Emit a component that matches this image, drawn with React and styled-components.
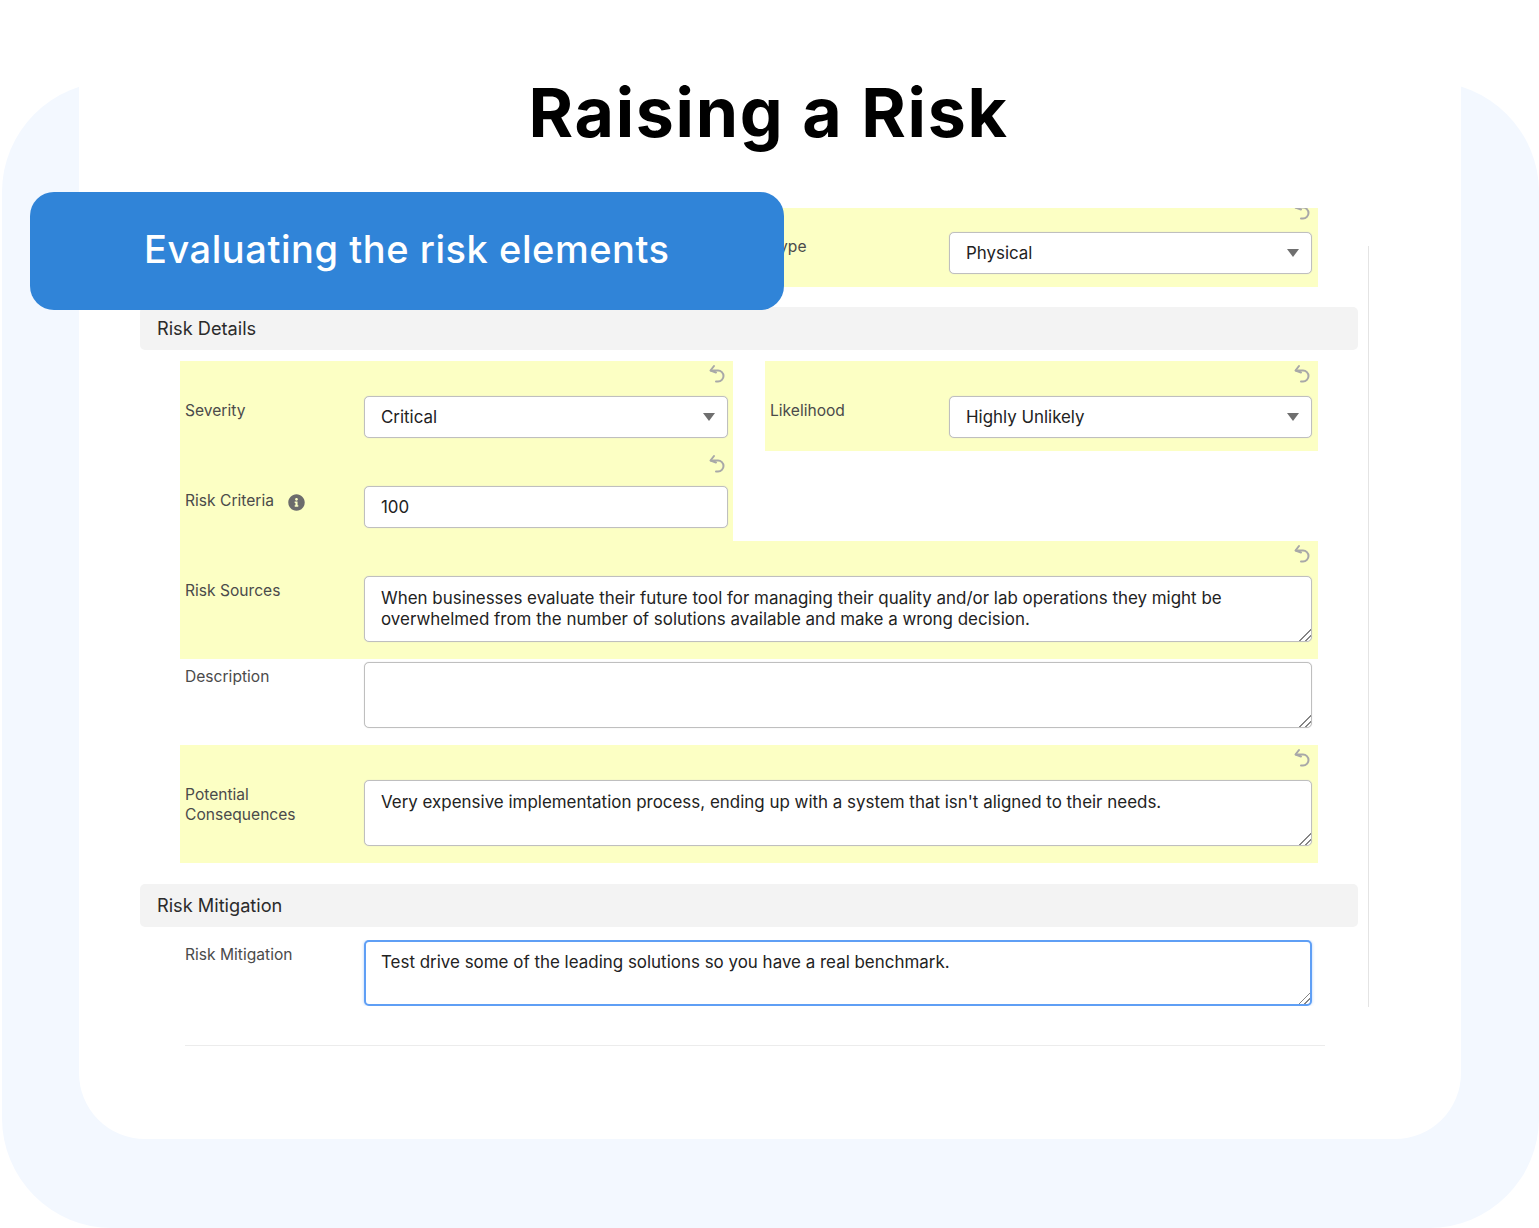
import styled, { createGlobalStyle } from "styled-components";
import { FaInfoCircle } from "react-icons/fa";

const GlobalStyle = createGlobalStyle`
  html, body { margin: 0; padding: 0; background: #fff; }
  * { box-sizing: border-box; }
`;

const Page = styled.div`
  position: relative;
  width: 1539px;
  height: 1228px;
  padding: 0 78px 0 79px;
  overflow: hidden;
  background: #fff;
  font-family: Inter, "Liberation Sans", sans-serif;
  &::before {
    content: "";
    position: absolute;
    left: 2px;
    right: 0;
    top: 82px;
    bottom: 0;
    border-radius: 110px;
    background: #f3f8ff;
  }
`;

const Panel = styled.main`
  position: relative;
  height: 1139px;
  padding: 72px 0 0 61px;
  background: #fff;
  border-radius: 0 0 66px 66px;
`;

const Title = styled.h1`
  margin: 0 0 56px -61px;
  padding-right: 3px;
  height: 80px;
  font-family: Inter, "Noto Sans", sans-serif;
  font-size: 68px;
  font-weight: 700;
  letter-spacing: 1.7px;
  line-height: 80px;
  text-align: center;
  color: #000;
`;

const Callout = styled.div`
  position: absolute;
  left: 30px;
  top: 192px;
  width: 754px;
  height: 118px;
  padding: 0 0 4px 114px;
  display: flex;
  align-items: center;
  border-radius: 24px;
  background: #3084d8;
  color: #fff;
  font-family: Inter, "Noto Sans", sans-serif;
  font-size: 38px;
  font-weight: 500;
  letter-spacing: 0.55px;
`;

const Form = styled.form`
  position: relative;
  width: 1218px;
  &::after {
    content: "";
    position: absolute;
    left: 1228px;
    top: 38px;
    height: 761px;
    width: 1px;
    background: #e4e4e4;
  }
`;

const Columns = styled.div`
  display: grid;
  grid-template-columns: 553px 553px;
  column-gap: 32px;
  margin-left: 40px;
  align-items: start;
`;

const Stack = styled.div`
  margin-left: 40px;
  width: 1138px;
`;

const Field = styled.div`
  display: grid;
  grid-template-columns: 184px 1fr;
  padding: ${(p) => p.$top}px ${(p) => (p.$narrow ? 5 : 6)}px ${(p) => p.$bottom}px 0;
  position: relative;
  overflow: hidden;
  background: ${(p) => (p.$highlight ? "#fcffc4" : "transparent")};
`;

const Revert = styled.svg`
  position: absolute;
  right: 7px;
  top: ${(p) => p.$top}px;
  width: 18px;
  height: 20px;
  fill: none;
  stroke: #a8a8a8;
  stroke-width: 2;
  stroke-linecap: round;
  stroke-linejoin: round;
`;

const Label = styled.label`
  padding: 5px 8px 0 5px;
  display: flex;
  gap: 14px;
  font-size: 15.6px;
  line-height: 20px;
  color: #4b4b4b;
  svg {
    margin-top: 3px;
    width: 17px;
    height: 17px;
    color: #6c6c6c;
  }
`;

const SelectBox = styled.div`
  height: 42px;
  padding: 0 12px 0 16px;
  display: flex;
  align-items: center;
  justify-content: space-between;
  background: #fff;
  border: 1px solid #bfbfbf;
  box-shadow: 0 0 1px #c9c9c9;
  border-radius: 5px;
  font-size: 16.9px;
  color: #222;
`;

const Caret = styled.span`
  width: 0;
  height: 0;
  border-left: 6.5px solid transparent;
  border-right: 6.5px solid transparent;
  border-top: 8px solid #6f6f6f;
`;

const TextInput = styled.input`
  display: block;
  width: 100%;
  height: 42px;
  padding: 0 16px;
  background: #fff;
  border: 1px solid #bfbfbf;
  box-shadow: 0 0 1px #c9c9c9;
  border-radius: 5px;
  outline: none;
  font: 16.9px Inter, sans-serif;
  color: #222;
`;

const TextArea = styled.textarea`
  display: block;
  width: 100%;
  height: 66px;
  padding: ${(p) => (p.$focused ? "10px 15px 0" : "11px 16px 0")};
  background: #fff;
  border: ${(p) => (p.$focused ? "2px solid #5f9ff5" : "1px solid #bfbfbf")};
  box-shadow: ${(p) => (p.$focused ? "0 0 3px #5f9ff580" : "0 0 1px #c9c9c9")};
  border-radius: 5px;
  outline: none;
  overflow: hidden;
  font: 16.95px/21px Inter, sans-serif;
  color: #222;
  &::-webkit-resizer {
    background: linear-gradient(
      135deg,
      transparent 60%,
      #858585 60%,
      #858585 66%,
      transparent 66%,
      transparent 78%,
      #858585 78%,
      #858585 84%,
      transparent 84%
    );
  }
`;

const SectionHeader = styled.h2`
  margin: ${(p) => p.$top}px 0 ${(p) => p.$bottom}px;
  height: 43px;
  padding-left: 17px;
  border-radius: 5px;
  background: #f3f3f3;
  font-size: 18.2px;
  font-weight: 400;
  line-height: 43px;
  color: #2b2b2b;
`;

const Divider = styled.hr`
  margin: 39px 0 0 45px;
  width: 1140px;
  height: 1px;
  border: 0;
  background: #ececec;
`;

const RevertIcon = ({ top = 3 }) => (
  <Revert $top={top} viewBox="0 0 18 20">
    <path d="M6 2 2.5 6.5 8 8.5" />
    <path d="M3 6.5h7a5.5 5.5 0 0 1 0 11H8" />
  </Revert>
);

const Select = ({ children }) => (
  <SelectBox>
    {children}
    <Caret />
  </SelectBox>
);

export default function App() {
  return (
    <Page>
      <GlobalStyle />
      <Panel>
        <Title>Raising a Risk</Title>
        <Form>
          <Columns>
            <div />
            <Field $highlight $top={24} $bottom={13}>
              <RevertIcon top={-7} />
              <Label>Type</Label>
              <Select>Physical</Select>
            </Field>
          </Columns>
          <SectionHeader $top={20} $bottom={11}>Risk Details</SectionHeader>
          <Columns>
            <div>
              <Field $highlight $narrow $top={35} $bottom={13}>
                <RevertIcon />
                <Label>Severity</Label>
                <Select>Critical</Select>
              </Field>
              <Field $highlight $narrow $top={35} $bottom={13}>
                <RevertIcon />
                <Label>
                  Risk Criteria
                  <FaInfoCircle />
                </Label>
                <TextInput defaultValue="100" />
              </Field>
            </div>
            <Field $highlight $top={35} $bottom={13}>
              <RevertIcon />
              <Label>Likelihood</Label>
              <Select>Highly Unlikely</Select>
            </Field>
          </Columns>
          <Stack>
            <Field $highlight $top={35} $bottom={17}>
              <RevertIcon />
              <Label>Risk Sources</Label>
              <TextArea defaultValue="When businesses evaluate their future tool for managing their quality and/or lab operations they might be overwhelmed from the number of solutions available and make a wrong decision." />
            </Field>
            <Field $top={3} $bottom={17}>
              <Label>Description</Label>
              <TextArea />
            </Field>
            <Field $highlight $top={35} $bottom={17}>
              <RevertIcon />
              <Label>Potential Consequences</Label>
              <TextArea defaultValue="Very expensive implementation process, ending up with a system that isn't aligned to their needs." />
            </Field>
          </Stack>
          <SectionHeader $top={21} $bottom={13}>Risk Mitigation</SectionHeader>
          <Stack>
            <Field $top={0} $bottom={0}>
              <Label>Risk Mitigation</Label>
              <TextArea $focused defaultValue="Test drive some of the leading solutions so you have a real benchmark." />
            </Field>
          </Stack>
          <Divider />
        </Form>
      </Panel>
      <Callout>Evaluating the risk elements</Callout>
    </Page>
  );
}
